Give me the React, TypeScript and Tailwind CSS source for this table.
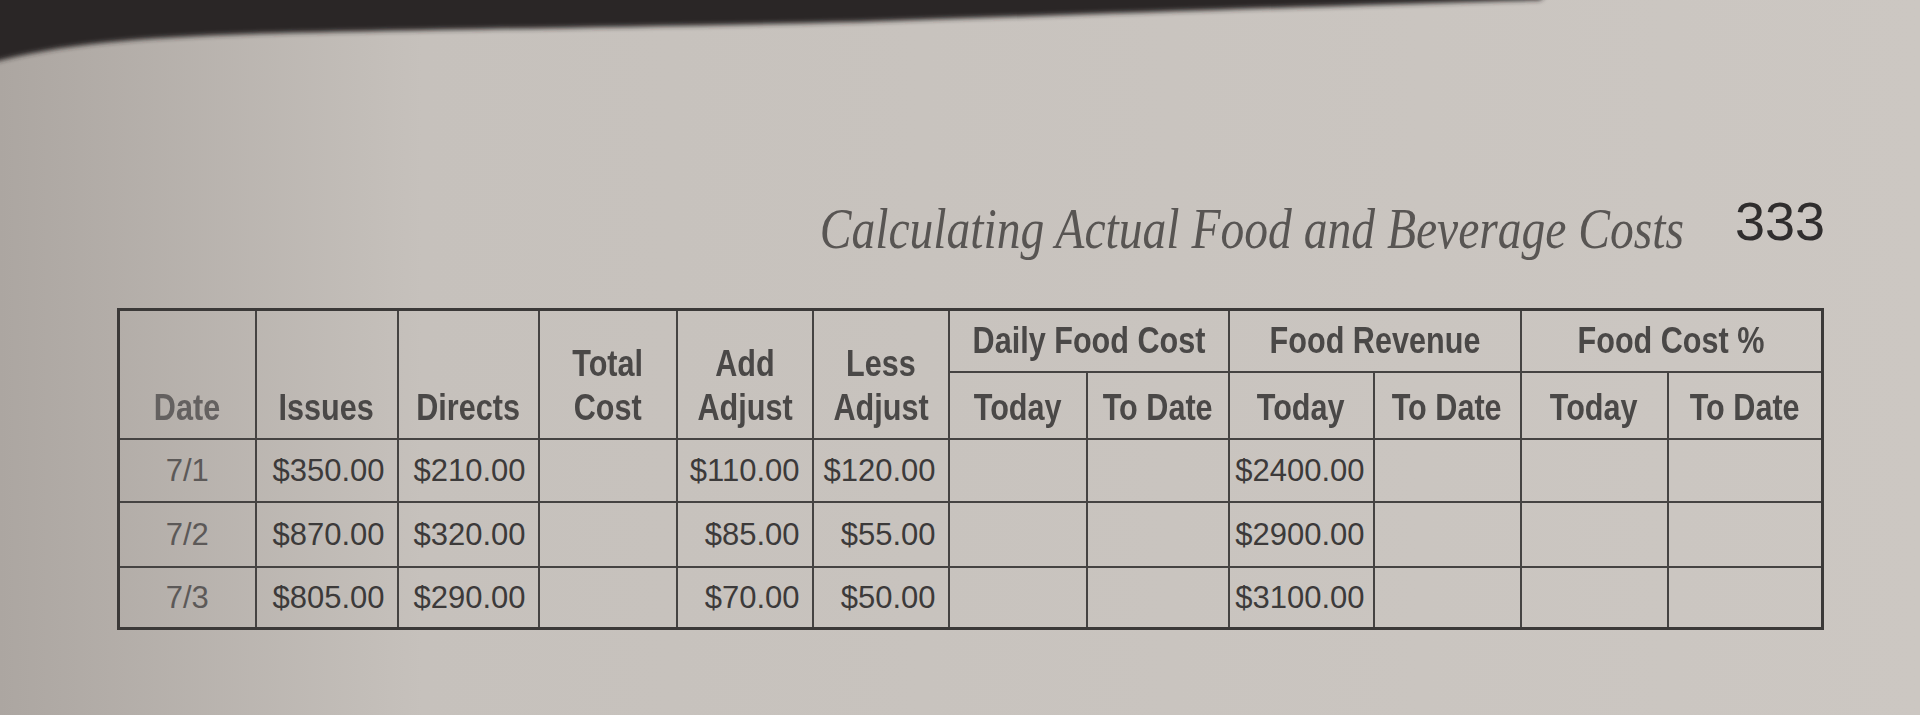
import React from "react";

const colW = [
  "w-[137px]",
  "w-[142px]",
  "w-[141px]",
  "w-[138px]",
  "w-[136px]",
  "w-[136px]",
  "w-[138px]",
  "w-[142px]",
  "w-[145px]",
  "w-[147px]",
  "w-[147px]",
  "w-[155px]",
];

const rows = [
  { date: "7/1", issues: "$350.00", directs: "$210.00", add: "$110.00", less: "$120.00", rev: "$2400.00", h: "h-[63px]" },
  { date: "7/2", issues: "$870.00", directs: "$320.00", add: "$85.00", less: "$55.00", rev: "$2900.00", h: "h-[65px]" },
  { date: "7/3", issues: "$805.00", directs: "$290.00", add: "$70.00", less: "$50.00", rev: "$3100.00", h: "h-[62px]" },
];

const thBase =
  "border-2 border-[#454342] font-bold text-[36px] leading-[44px] font-['Liberation_Sans',Arial,sans-serif] text-center px-0";
const th = `${thBase} text-[#4a4847]`;
const tdBase =
  "border-2 border-[#454342] text-[31px] leading-none font-['Liberation_Sans',Arial,sans-serif]";
const td = `${tdBase} text-[#3c3a3a] text-right pr-[12px]`;
const tdRev = `${tdBase} text-[#3c3a3a] text-right pr-[8px]`;
const tdDate = `${tdBase} text-[#5c5958] text-center`;

function H({ children }: { children: React.ReactNode }) {
  return <span className="inline-block scale-x-[0.85] origin-center whitespace-nowrap">{children}</span>;
}

export default function App() {
  return (
    <div className="relative w-[1920px] h-[715px] overflow-hidden bg-linear-to-r from-[#aca6a1] from-0% via-[#c6c1bc] via-22% to-[#ccc7c2] font-['Liberation_Sans',sans-serif]">
      <svg
        className="absolute left-0 top-0 pointer-events-none"
        width="1920"
        height="90"
        viewBox="0 0 1920 90"
      >
        <defs>
          <filter id="blur" x="-5%" y="-50%" width="110%" height="200%">
            <feGaussianBlur stdDeviation="2.5" />
          </filter>
        </defs>
        <path
          d="M-20,-20 L1560,-20 L1540,0 C1350,5 1100,14 857,22 C600,28 380,30 250,34 C130,38 50,45 -20,66 Z"
          fill="#2a2628"
          filter="url(#blur)"
        />
      </svg>

      <div className="flex flex-col">
        <div className="flex justify-end items-end pt-[194px] pr-[95px] gap-[51px]">
          <span className="block italic text-[58px] leading-none text-[#585553] scale-x-[0.82] origin-right font-['Liberation_Serif',serif] whitespace-nowrap">
            Calculating Actual Food and Beverage Costs
          </span>
          <span className="block text-[54px] leading-none text-[#302e2e] mb-[10px] font-['Liberation_Sans',sans-serif]">
            333
          </span>
        </div>

        <div className="mt-[50px] ml-[117px]">
          <table className="table-fixed w-[1704px] border-collapse border-[3px] border-[#3b3938]">
            <colgroup>
              {colW.map((w, i) => (
                <col key={i} className={w} />
              ))}
            </colgroup>
            <thead>
              <tr className="h-[62px]">
                <th rowSpan={2} className={`${thBase} text-[#646160] align-bottom pb-[8px]`}>
                  <H>Date</H>
                </th>
                <th rowSpan={2} className={`${th} align-bottom pb-[8px]`}>
                  <H>Issues</H>
                </th>
                <th rowSpan={2} className={`${th} align-bottom pb-[8px]`}>
                  <H>Directs</H>
                </th>
                <th rowSpan={2} className={`${th} align-bottom pb-[8px]`}>
                  <H>
                    Total
                    <br />
                    Cost
                  </H>
                </th>
                <th rowSpan={2} className={`${th} align-bottom pb-[8px]`}>
                  <H>
                    Add
                    <br />
                    Adjust
                  </H>
                </th>
                <th rowSpan={2} className={`${th} align-bottom pb-[8px]`}>
                  <H>
                    Less
                    <br />
                    Adjust
                  </H>
                </th>
                <th colSpan={2} className={`${th} align-middle`}>
                  <H>Daily Food Cost</H>
                </th>
                <th colSpan={2} className={`${th} align-middle`}>
                  <H>Food Revenue</H>
                </th>
                <th colSpan={2} className={`${th} align-middle`}>
                  <H>Food Cost %</H>
                </th>
              </tr>
              <tr className="h-[67px]">
                {["Today", "To Date", "Today", "To Date", "Today", "To Date"].map((t, i) => (
                  <th key={i} className={`${th} align-bottom pb-[8px]`}>
                    <H>{t}</H>
                  </th>
                ))}
              </tr>
            </thead>
            <tbody>
              {rows.map((r) => (
                <tr key={r.date} className={r.h}>
                  <td className={tdDate}>{r.date}</td>
                  <td className={td}>{r.issues}</td>
                  <td className={td}>{r.directs}</td>
                  <td className={td}></td>
                  <td className={td}>{r.add}</td>
                  <td className={td}>{r.less}</td>
                  <td className={td}></td>
                  <td className={td}></td>
                  <td className={tdRev}>{r.rev}</td>
                  <td className={td}></td>
                  <td className={td}></td>
                  <td className={td}></td>
                </tr>
              ))}
            </tbody>
          </table>
        </div>
      </div>
    </div>
  );
}
